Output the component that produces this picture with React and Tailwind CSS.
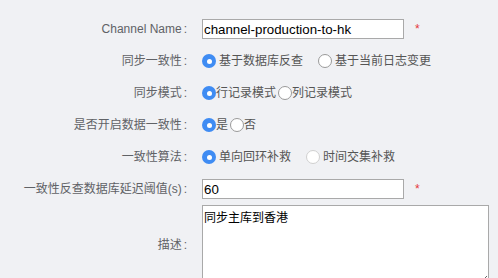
import React from "react"

const font = { fontFamily: '"Liberation Sans", "Noto Sans CJK SC", sans-serif' }

function Radio({ checked, label, faint, gap = "ml-[3px]", mr = "mr-[8px]" }) {
  return (
    <label className={`flex items-center ${mr}`}>
      {checked ? (
        <span className="w-[14px] h-[14px] rounded-full bg-[#3f8cf3] flex items-center justify-center">
          <span className="w-[5px] h-[5px] rounded-full bg-white" />
        </span>
      ) : (
        <span className={`w-[14px] h-[14px] rounded-full bg-white border ${faint ? "border-[#d0d0d0]" : "border-[#9a9a9a]"}`} />
      )}
      <span className={`${gap} text-[12px] text-[#555]`}>{label}</span>
    </label>
  )
}

function Row({ label, children, required }) {
  return (
    <div className="flex items-center h-[32px]">
      <div className="w-[187px] text-right text-[12px] text-[#606266] whitespace-nowrap">
        {label}<span className="ml-[2px]">:</span>
      </div>
      <div className="ml-[15px] flex items-center">
        {children}
        {required && <span className="ml-[11px] text-[#e5383b] text-[12px] leading-none">*</span>}
      </div>
    </div>
  )
}

export default function App() {
  return (
    <div className="w-[498px] h-[278px] overflow-hidden bg-[#f0f1f4] pt-[13px]" style={font}>
      <Row label="Channel Name" required>
        <input
          readOnly
          value="channel-production-to-hk"
          className="w-[202px] h-[20px] border border-[#a9a9a9] bg-white px-[1px] text-[13.3px] text-black outline-none"
          style={font}
        />
      </Row>
      <Row label="同步一致性">
        <Radio checked label="基于数据库反查" mr="mr-[15px]" />
        <Radio label="基于当前日志变更" />
      </Row>
      <Row label="同步模式">
        <Radio checked label="行记录模式" gap="ml-0" mr="mr-[2px]" />
        <Radio label="列记录模式" gap="ml-0" />
      </Row>
      <Row label="是否开启数据一致性">
        <Radio checked label="是" gap="ml-0" mr="mr-[2px]" />
        <Radio label="否" gap="ml-0" />
      </Row>
      <Row label="一致性算法">
        <Radio checked label="单向回环补救" mr="mr-[15px]" />
        <Radio faint label="时间交集补救" />
      </Row>
      <Row label="一致性反查数据库延迟阈值(s)" required>
        <input
          readOnly
          value="60"
          className="w-[202px] h-[20px] border border-[#a9a9a9] bg-white px-[1px] text-[13.3px] text-black outline-none"
          style={font}
        />
      </Row>
      <div className="flex">
        <div className="w-[187px] h-[80px] flex items-center justify-end text-[12px] text-[#606266]">
          描述<span className="ml-[2px]">:</span>
        </div>
        <textarea
          readOnly
          value="同步主库到香港"
          className="ml-[15px] w-[287px] h-[80px] border border-[#a9a9a9] bg-white px-[1px] pt-[3px] text-[12px] text-black outline-none"
          style={font}
        />
      </div>
    </div>
  )
}
